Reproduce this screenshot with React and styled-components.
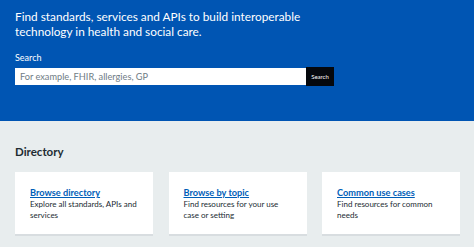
import styled, { createGlobalStyle } from 'styled-components';

const GlobalStyle = createGlobalStyle`
  body {
    margin: 0;
    font-family: Lato, "Open Sans", Arial, sans-serif;
    background: #e8edee;
  }
`;

const Hero = styled.section`
  background: #0055b3;
  color: #fff;
  padding: 10px 15px 0;
  height: 121px;
  box-sizing: border-box;
`;

const Lead = styled.h1`
  margin: 0;
  font-size: 11.8px;
  font-weight: 400;
  line-height: 14.5px;
  max-width: 300px;
`;

const Label = styled.label`
  display: block;
  margin-top: 13px;
  font-size: 9px;
  line-height: 12px;
`;

const SearchRow = styled.form`
  display: flex;
  margin-top: 3px;
  width: 319px;
`;

const Input = styled.input`
  flex: 1;
  height: 17px;
  margin: 1px 0;
  box-sizing: border-box;
  border: none;
  padding: 0 5px;
  font-family: inherit;
  font-size: 9.2px;
  color: #4c6272;
  &::placeholder {
    color: #6f7c85;
  }
`;

const Button = styled.button`
  width: 28px;
  height: 19px;
  border: none;
  background: #05080d;
  color: #fff;
  font-family: inherit;
  font-size: 6px;
  padding: 0;
`;

const Main = styled.section`
  padding: 24px 15px 0;
`;

const Heading = styled.h2`
  margin: 0 0 13px;
  font-size: 11.5px;
  font-weight: 700;
  line-height: 14px;
  color: #212b32;
`;

const Cards = styled.div`
  display: grid;
  grid-template-columns: repeat(3, 138px);
  column-gap: 15.5px;
`;

const Card = styled.div`
  background: #fff;
  height: 64px;
  box-sizing: border-box;
  border-bottom: 2px solid #d8dde0;
  padding: 15px 15px 0;
`;

const CardLink = styled.a`
  display: block;
  font-size: 9.2px;
  font-weight: 700;
  line-height: 12px;
  color: #005eb8;
  text-decoration: underline;
  text-underline-offset: 1px;
`;

const CardText = styled.p`
  margin: 0;
  font-size: 8px;
  line-height: 11px;
  color: #212b32;
`;

const items = [
  { title: 'Browse directory', text: 'Explore all standards, APIs and services' },
  { title: 'Browse by topic', text: 'Find resources for your use case or setting' },
  { title: 'Common use cases', text: 'Find resources for common needs' },
];

export default function App() {
  return (
    <>
      <GlobalStyle />
      <Hero>
        <Lead>Find standards, services and APIs to build interoperable technology in health and social care.</Lead>
        <Label htmlFor="q">Search</Label>
        <SearchRow onSubmit={(e) => e.preventDefault()}>
          <Input id="q" placeholder="For example, FHIR, allergies, GP" />
          <Button type="submit">Search</Button>
        </SearchRow>
      </Hero>
      <Main>
        <Heading>Directory</Heading>
        <Cards>
          {items.map((item) => (
            <Card key={item.title}>
              <CardLink href="#">{item.title}</CardLink>
              <CardText>{item.text}</CardText>
            </Card>
          ))}
        </Cards>
      </Main>
    </>
  );
}
